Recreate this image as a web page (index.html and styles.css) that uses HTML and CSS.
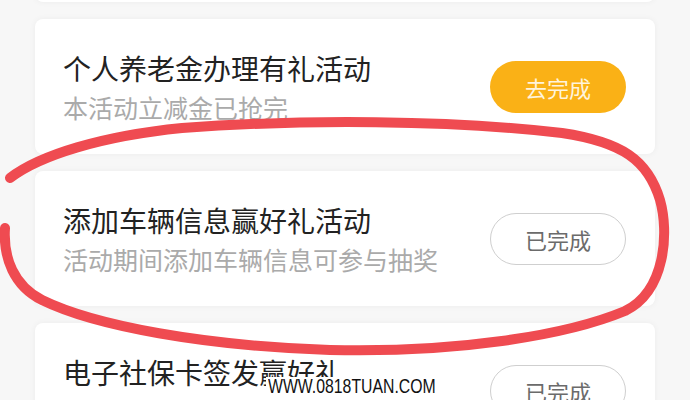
FILE: index.html
```html
<!DOCTYPE html>
<html lang="zh-CN">
<head>
<meta charset="utf-8">
<title>活动列表</title>
<link rel="stylesheet" href="styles.css">
</head>
<body>
<div class="list">
  <div class="card card-ghost"></div>
  <div class="card">
    <div class="info">
      <div class="title">个人养老金办理有礼活动</div>
      <div class="sub">本活动立减金已抢完</div>
    </div>
    <div class="btn btn-go">去完成</div>
  </div>
  <div class="card">
    <div class="info">
      <div class="title">添加车辆信息赢好礼活动</div>
      <div class="sub">活动期间添加车辆信息可参与抽奖</div>
    </div>
    <div class="btn btn-done">已完成</div>
  </div>
  <div class="card">
    <div class="info">
      <div class="title">电子社保卡签发赢好礼</div>
      <div class="sub">签发电子社保卡可参与抽奖</div>
    </div>
    <div class="btn btn-done">已完成</div>
  </div>
</div>
<svg class="mark" width="690" height="400" viewBox="0 0 690 400">
  <path d="M5,228 C3,258 14,286 42,300 C95,326 205,346 330,350 C455,353 565,336 625,311 C666,291 669,232 660,200 C648,160 622,142 562,133 C452,120 302,119 182,128 C102,136 40,155 10,178" fill="none" stroke="#ef4b51" stroke-width="10" stroke-linecap="round" stroke-linejoin="round"/>
</svg>
<div class="watermark"><span>WWW.0818TUAN.COM</span></div>
</body>
</html>
```
FILE: styles.css
```css
html, body {
  margin: 0;
  padding: 0;
}
body {
  width: 690px;
  height: 400px;
  overflow: hidden;
  background: #f7f7f7;
  font-family: "Noto Sans CJK SC", "Noto Sans", sans-serif;
  position: relative;
}
.list {
  display: flex;
  flex-direction: column;
  gap: 17px;
  padding: 0 35px;
  margin-top: -133px;
}
.card {
  height: 135px;
  flex: none;
  background: #fff;
  border-radius: 8px;
  box-shadow: 0 0 6px rgba(0, 0, 0, 0.05);
  display: flex;
  align-items: center;
  justify-content: space-between;
  padding: 0 29px 0 28px;
}
.info {
  display: flex;
  flex-direction: column;
  gap: 4px;
}
.title {
  font-size: 28px;
  line-height: 36px;
  color: #222;
}
.sub {
  font-size: 25px;
  line-height: 34px;
  color: #aaa;
}
.btn {
  width: 136px;
  height: 52px;
  box-sizing: border-box;
  border-radius: 26px;
  display: flex;
  align-items: center;
  justify-content: center;
  font-size: 22px;
}
.btn-go {
  background: #fab116;
  color: #fff4dc;
}
.btn-done {
  border: 1.5px solid #cfcfcf;
  color: #6b6b6b;
  background: #fff;
}
.mark {
  position: absolute;
  left: 0;
  top: 0;
  pointer-events: none;
}
.watermark {
  position: absolute;
  left: 266px;
  top: 377px;
  width: 162px;
  height: 23px;
  background: #fff;
}
.watermark span {
  display: block;
  font-family: "Liberation Sans", Arial, sans-serif;
  font-size: 20px;
  line-height: 20px;
  color: #111;
  white-space: nowrap;
  transform: scaleX(0.79);
  transform-origin: left top;
  margin-left: 2px;
  margin-top: -1px;
}
```
